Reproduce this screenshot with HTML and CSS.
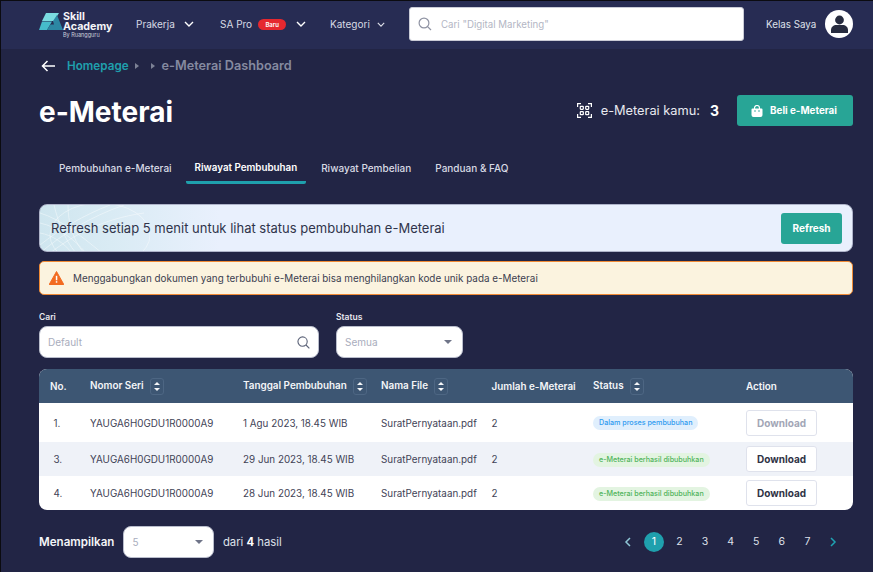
FILE: index.html
```html
<!DOCTYPE html>
<html lang="id">
<head>
<meta charset="utf-8">
<title>e-Meterai Dashboard</title>
<link rel="stylesheet" href="styles.css">
</head>
<body>
<div class="page">
<header class="topbar">
  <a class="logo">
    <svg class="logo-mark" width="24" height="20" viewBox="0 0 24 20"><path d="M7 1H20L15 9H3z" fill="#7adbe0"/><path d="M3 9.500H13L8 18H0z" fill="#46bccb"/><path d="M18 3l6 15H8l3.500-5.500h3.500L14 9z" fill="#2c87a3"/></svg>
    <span class="logo-text"><b>Skill</b><b>Academy</b><small>By Ruangguru</small></span>
  </a>
  <nav class="mainnav">
    <span class="navitem w1">Prakerja <svg class="chev" width="10" height="6" viewBox="0 0 10 6"><path d="M1 1l4 4 4-4" fill="none" stroke="#fff" stroke-width="1.4"/></svg></span>
    <span class="navitem w2">SA Pro <i class="new">Baru</i> <svg class="chev" width="10" height="6" viewBox="0 0 10 6"><path d="M1 1l4 4 4-4" fill="none" stroke="#fff" stroke-width="1.4"/></svg></span>
    <span class="navitem w3">Kategori <svg class="chev" width="8" height="5" viewBox="0 0 10 6"><path d="M1 1l4 4 4-4" fill="none" stroke="#dfe1ea" stroke-width="1.4"/></svg></span>
  </nav>
  <div class="topsearch">
    <svg width="14" height="14" viewBox="0 0 14 14"><circle cx="6" cy="6" r="4.9" fill="none" stroke="#8f93a3" stroke-width="1.2"/><path d="M9.6 9.6L13 13" stroke="#8f93a3" stroke-width="1.2"/></svg>
    <span>Cari "Digital Marketing"</span>
  </div>
  <span class="myclass">Kelas Saya</span>
  <span class="avatar"><svg width="17" height="18" viewBox="0 0 17 18"><circle cx="8.500" cy="5" r="4.400" fill="#272c3f"/><path d="M0 18v-3c0-3 2.500-5 5.500-5h6c3 0 5.500 2 5.500 5v3z" fill="#272c3f"/></svg></span>
</header>

<main class="content">
  <div class="crumbs">
    <svg class="back" width="14" height="12" viewBox="0 0 14 12"><path d="M14 6H1.500M6.500 1L1.500 6l5 5" fill="none" stroke="#fff" stroke-width="1.5"/></svg>
    <a class="crumb-link">Homepage</a>
    <i class="tri"></i><i class="tri second"></i>
    <span class="crumb-current">e-Meterai Dashboard</span>
  </div>

  <div class="titlerow">
    <h1>e-Meterai</h1>
    <div class="balance">
      <svg width="15" height="15" viewBox="0 0 15 15" fill="none" stroke="#fff" stroke-width="1.200"><path d="M.6 4V.6H4M11 .6h3.400V4M14.400 11v3.400H11M4 14.400H.6V11"/><rect x="3.300" y="3.300" width="3" height="3" rx=".5"/><rect x="8.700" y="3.300" width="3" height="3" rx=".5"/><rect x="3.300" y="8.700" width="3" height="3" rx=".5"/><rect x="8.700" y="8.700" width="3" height="3" rx=".5"/></svg>
      <span class="bal-label">e-Meterai kamu:</span>
      <b class="bal-num">3</b>
    </div>
    <button class="buy"><svg width="12" height="12" viewBox="0 0 11 12"><path d="M3 4V3a2.500 2.500 0 0 1 5 0v1" fill="none" stroke="#fff" stroke-width="1.200"/><path d="M1 3.500h9a1 1 0 0 1 1 1V10a2 2 0 0 1-2 2H2a2 2 0 0 1-2-2V4.500a1 1 0 0 1 1-1z" fill="#fff"/><circle cx="3.500" cy="6" r=".8" fill="#28a596"/><circle cx="7.500" cy="6" r=".8" fill="#28a596"/></svg>Beli e-Meterai</button>
  </div>

  <div class="tabs">
    <span class="tab">Pembubuhan e-Meterai</span>
    <span class="tab active">Riwayat Pembubuhan</span>
    <span class="tab">Riwayat Pembelian</span>
    <span class="tab">Panduan &amp; FAQ</span>
  </div>

  <section class="refresh">
    <svg class="mesh" width="110" height="48" viewBox="0 0 110 48" fill="none" stroke="#fff" stroke-opacity=".7" stroke-width=".6"><path d="M0 8C20 14 40 30 62 48M0 18C18 22 34 34 46 48M0 28C12 30 24 38 32 48M14 0C18 16 24 34 36 48M28 0C28 16 32 34 44 48M0 40C20 24 44 10 70 0M0 48C24 28 50 12 84 0M10 48C34 30 62 14 104 8"/><ellipse cx="60" cy="30" rx="50" ry="32"/></svg>
    <p>Refresh setiap 5 menit untuk lihat status pembubuhan e-Meterai</p>
    <button class="refresh-btn">Refresh</button>
  </section>

  <section class="warn">
    <svg width="15" height="14" viewBox="0 0 15 14"><path d="M7.500.5L14.800 13.500H.2z" fill="#f26b21" stroke="#f26b21" stroke-linejoin="round"/><rect x="6.800" y="4.800" width="1.500" height="4.500" fill="#fff"/><rect x="6.800" y="10.200" width="1.500" height="1.500" fill="#fff"/></svg>
    <span>Menggabungkan dokumen yang terbubuhi e-Meterai bisa menghilangkan kode unik pada e-Meterai</span>
  </section>

  <div class="filters">
    <label class="field f-search">
      <span class="field-label">Cari</span>
      <span class="box"><span class="ph">Default</span><svg width="13" height="13" viewBox="0 0 14 14"><circle cx="6" cy="6" r="5" fill="none" stroke="#5c6378" stroke-width="1.200"/><path d="M9.700 9.700L13.300 13.300" stroke="#5c6378" stroke-width="1.200"/></svg></span>
    </label>
    <label class="field f-status">
      <span class="field-label">Status</span>
      <span class="box"><span class="ph">Semua</span><i class="caret"></i></span>
    </label>
  </div>

  <div class="tablewrap">
    <table>
      <colgroup><col class="c1"><col class="c2"><col class="c3"><col class="c4"><col class="c5"><col class="c6"><col class="c7"></colgroup>
      <thead>
        <tr>
          <th class="num-h">No.</th>
          <th>Nomor Seri<i class="sort"></i></th>
          <th>Tanggal Pembubuhan<i class="sort"></i></th>
          <th>Nama File<i class="sort"></i></th>
          <th>Jumlah e-Meterai</th>
          <th>Status<i class="sort"></i></th>
          <th>Action</th>
        </tr>
      </thead>
      <tbody>
        <tr class="first">
          <td class="num">1.</td><td>YAUGA6H0GDU1R0000A9</td><td>1 Agu 2023, 18.45 WIB</td><td>SuratPernyataan.pdf</td><td>2</td>
          <td><span class="pill info">Dalam proses pembubuhan</span></td>
          <td><button class="dl off">Download</button></td>
        </tr>
        <tr class="alt">
          <td class="num">3.</td><td>YAUGA6H0GDU1R0000A9</td><td>29 Jun 2023, 18.45 WIB</td><td>SuratPernyataan.pdf</td><td>2</td>
          <td><span class="pill ok">e-Meterai berhasil dibubuhkan</span></td>
          <td><button class="dl">Download</button></td>
        </tr>
        <tr>
          <td class="num">4.</td><td>YAUGA6H0GDU1R0000A9</td><td>28 Jun 2023, 18.45 WIB</td><td>SuratPernyataan.pdf</td><td>2</td>
          <td><span class="pill ok">e-Meterai berhasil dibubuhkan</span></td>
          <td><button class="dl">Download</button></td>
        </tr>
      </tbody>
    </table>
  </div>

  <footer class="pager">
    <div class="showing">
      <b>Menampilkan</b>
      <span class="box small"><span class="ph">5</span><i class="caret"></i></span>
      <span class="total">dari <b>4</b> hasil</span>
    </div>
    <div class="pages">
      <svg class="arrow" width="7" height="10" viewBox="0 0 7 10"><path d="M6 1L2 5l4 4" fill="none" stroke="#8fc7d6" stroke-width="1.500"/></svg>
      <span class="pg current">1</span><span class="pg">2</span><span class="pg">3</span><span class="pg">4</span><span class="pg">5</span><span class="pg">6</span><span class="pg">7</span>
      <svg class="arrow" width="7" height="10" viewBox="0 0 7 10"><path d="M1 1l4 4-4 4" fill="none" stroke="#1fa3b3" stroke-width="1.500"/></svg>
    </div>
  </footer>
</main>
</div>
</body>
</html>
```

FILE: styles.css
```css
* { box-sizing: border-box; }
html, body { margin: 0; padding: 0; height: 100%; }
body { background: #222545; font-family: Inter, "Liberation Sans", sans-serif; color: #fff; overflow: hidden; }
.page { width: 873px; height: 572px; border-top: 1px solid #0b0b10; border-left: 1px solid #0b0b10; overflow: hidden; }
b { font-weight: 700; }

.topbar { height: 48px; background: #272c53; display: flex; align-items: center; padding: 0 0 2px 38px; }
.logo { display: flex; align-items: flex-start; width: 97px; height: 28px; flex: none; }
.logo-mark { margin: 2px 0 0 0; flex: none; }
.logo-text { display: flex; flex-direction: column; line-height: 10px; font-size: 10.700px; padding-top: 2px; }
.logo-text b { font-weight: 700; color: #f4f5f8; }
.logo-text small { font-size: 5.500px; line-height: 7px; color: #cfd2de; white-space: nowrap; }
.mainnav { display: flex; align-items: center; flex: none; font-size: 10px; color: #d8dae4; }
.navitem { display: flex; align-items: center; flex: none; }
.w1 { width: 84px; }
.w1 .chev { margin-left: 9px; }
.w2 { width: 110px; }
.new { font-style: normal; font-size: 6px; font-weight: 600; line-height: 11px; height: 11px; width: 28px; text-align: center; background: #e5282f; color: #fff; border-radius: 6px; margin: 0 10px 0 6px; }
.w3 { width: 79px; }
.w3 .chev { margin-left: 7px; }
.topsearch { flex: none; width: 335px; height: 34px; background: #fff; border: 1px solid #c9cbd6; border-radius: 3px; display: flex; align-items: center; padding-left: 8px; gap: 9px; font-size: 9.700px; color: #b3b6c4; }
.myclass { flex: none; margin-left: 22px; font-size: 9.800px; color: #dfe1ea; width: 59px; white-space: nowrap; }
.avatar { flex: none; width: 28px; height: 28px; border-radius: 50%; background: #fff; display: flex; align-items: center; justify-content: center; }

.content { width: 814px; margin-left: 38px; }
.crumbs { height: 32px; padding-top: 1px; display: flex; align-items: center; font-size: 12.700px; font-weight: 600; }
.back { margin: 0 12px 0 2px; }
.crumb-link { color: #1fa0ad; font-size: 11.700px; }
.tri { width: 0; height: 0; border-left: 4px solid #7d8296; border-top: 3px solid transparent; border-bottom: 3px solid transparent; margin-left: 6px; }
.tri.second { margin-left: 12px; margin-right: 7px; }
.crumb-current { color: #858aa0; }

.titlerow { display: flex; align-items: center; height: 59px; }
h1 { margin: 0; padding-top: 3px; font-size: 28px; line-height: 34px; font-weight: 700; flex: 1; }
.balance { display: flex; align-items: center; font-size: 12.800px; color: #e8e9ef; }
.bal-label { margin: 0 10px 0 9px; }
.bal-num { font-size: 14px; color: #fff; }
.buy { margin-left: 18px; width: 116px; height: 31px; background: #28a596; border: 0; border-radius: 3px; color: #fff; font: 700 9.800px Inter, "Liberation Sans", sans-serif; display: flex; align-items: center; justify-content: center; gap: 7px; padding: 0 2px 0 0; }

.tabs { display: flex; height: 35px; margin-top: 9px; padding-left: 9px; font-size: 10px; color: #d8dae4; font-weight: 500; }
.tab { padding: 13px 13px 0 11px; height: 35px; white-space: nowrap; }
.tab.active { color: #fff; font-size: 9.800px; font-weight: 600; border-bottom: 3px solid #1fa0ad; border-radius: 2px; padding: 13px 9px 0; margin: 0 4px 0 1px; }

.refresh { position: relative; overflow: hidden; margin-top: 20px; height: 48px; background: linear-gradient(90deg, #cfe6ef 0, #d9ebf4 70px, #e9f0fd 180px); border: 1px solid #aeb3c9; border-radius: 8px; display: flex; align-items: center; justify-content: space-between; padding: 0 10px 0 11px; }
.mesh { position: absolute; left: 0; top: 0; }
.refresh p { position: relative; margin: 0; font-size: 13px; color: #30344b; }
.refresh-btn { width: 61px; height: 31px; background: #28a596; border: 0; border-radius: 3px; color: #fff; font: 700 10px Inter, "Liberation Sans", sans-serif; }

.warn { margin-top: 9px; height: 34px; background: #fbf3df; border: 1px solid #f08a35; border-radius: 5px; display: flex; align-items: center; padding-left: 9px; gap: 9px; font-size: 9.900px; color: #3b3e50; }

.filters { display: flex; gap: 17px; margin-top: 17px; }
.field { display: flex; flex-direction: column; }
.f-search { width: 280px; }
.f-status { width: 127px; }
.field-label { font-size: 8.500px; font-weight: 600; line-height: 11px; color: #e8e9ef; margin-bottom: 3px; }
.box { height: 32px; background: #fff; border: 1px solid #b9bdcc; border-radius: 8px; display: flex; align-items: center; justify-content: space-between; padding: 0 8px; }
.ph { font-size: 10px; color: #a9adbd; }
.caret { width: 0; height: 0; border-top: 4px solid #6f7488; border-left: 4px solid transparent; border-right: 4px solid transparent; margin-right: 2px; }

.tablewrap { margin-top: 11px; border-radius: 8px; overflow: hidden; }
table { width: 814px; border-collapse: collapse; table-layout: fixed; font-size: 9.850px; background: #fff; color: #3f4356; }
.c1 { width: 51px; } .c2 { width: 153px; } .c3 { width: 138px; } .c4 { width: 110.500px; } .c5 { width: 101.500px; } .c6 { width: 153px; } .c7 { width: 107px; }
th { height: 34px; padding: 0; background: #3d5673; color: #f4f5f8; text-align: left; font-size: 9.900px; font-weight: 600; white-space: nowrap; }
.num-h { padding-left: 11px; }
.sort { display: inline-block; vertical-align: middle; position: relative; width: 14px; height: 17px; margin-left: 6px; border: 1px solid #4d6683; border-radius: 3px; }
.sort::before, .sort::after { content: ""; position: absolute; left: 3px; width: 0; height: 0; border-left: 3px solid transparent; border-right: 3px solid transparent; }
.sort::before { top: 3px; border-bottom: 3px solid #f4f5f8; }
.sort::after { bottom: 3px; border-top: 3px solid #f4f5f8; }
td { height: 34px; padding: 0; white-space: nowrap; }
.first td { height: 39px; }
.alt td { background: #eff2f8; }
.num { padding-left: 14.500px; }
.pill { display: inline-block; height: 14px; line-height: 14px; padding: 0 6px; border-radius: 8px; font-size: 7.150px; font-weight: 500; }
.info { background: #e0effd; color: #2f9bf0; }
.ok { background: #e3f4e1; color: #4fb35a; }
.dl { display: block; width: 71px; height: 26px; padding: 0; background: #fff; border: 1px solid #dfe2ec; border-radius: 3px; color: #2f3245; font: 700 10px Inter, "Liberation Sans", sans-serif; }
.dl.off { color: #a2a6b6; }

.pager { display: flex; align-items: center; justify-content: space-between; margin-top: 16px; }
.showing { display: flex; align-items: center; font-size: 11.300px; color: #dfe1ea; }
.showing > b { color: #f4f5f8; font-weight: 600; font-size: 11.600px; }
.box.small { width: 91px; margin: 0 8.500px 0 9px; }
.total b { color: #fff; }
.pages { display: flex; align-items: center; margin-right: 16px; font-size: 10.500px; color: #dfe1ea; }
.pg { width: 20px; height: 20px; line-height: 20px; text-align: center; border-radius: 50%; margin-right: 5.600px; }
.pg.current { background: #1fa0ad; color: #fff; }
.arrow:first-child { margin-right: 13px; }
.arrow:last-child { margin-left: 7px; }
```
